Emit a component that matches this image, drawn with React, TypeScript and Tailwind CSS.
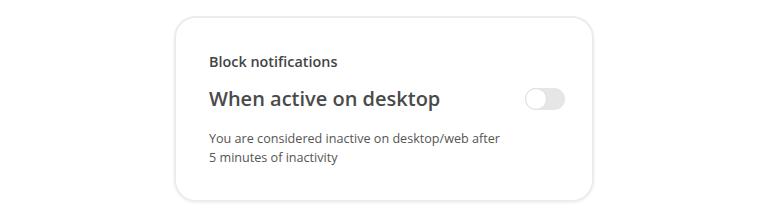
export default function App() {
  return (
    <div className="flex h-[216px] w-[768px] items-start justify-center bg-white pt-[16px]" style={{ fontFamily: '"Open Sans", "Noto Sans", sans-serif' }}>
      <div className="w-[420px] h-[186px] rounded-[22px] border-2 border-[#ececec] bg-white px-[33px] pt-[34px] shadow-[0_1px_3px_rgba(0,0,0,0.06)]">
        <div className="text-[14.4px] font-semibold leading-[20px] text-[#444]">Block notifications</div>
        <div className="mt-[13px] flex items-center justify-between">
          <div className="text-[20px] font-semibold leading-[28px] text-[#4a4a4a]">When active on desktop</div>
          <Toggle />
        </div>
        <p className="mt-[16px] text-[12.6px] leading-[19px] text-[#555]">
          You are considered inactive on desktop/web after
          <br />
          5 minutes of inactivity
        </p>
      </div>
    </div>
  );
}

function Toggle() {
  return (
    <div className="mr-[-6px] flex h-[22px] w-[40px] items-center rounded-full bg-[#e6e6e6]">
      <div className="h-[22px] w-[22px] rounded-full border border-[#e0e0e0] bg-white" />
    </div>
  );
}
